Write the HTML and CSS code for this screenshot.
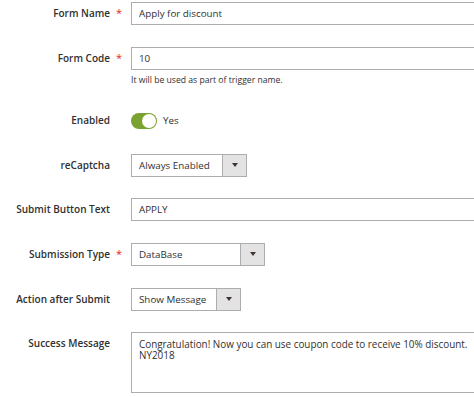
FILE: index.html
```html
<!DOCTYPE html>
<html>
<head>
<meta charset="utf-8">
<link rel="stylesheet" href="styles.css">
</head>
<body>
<form class="form">
  <div class="row">
    <label class="label required">Form Name</label>
    <div class="control"><input class="input" type="text" value="Apply for discount"></div>
  </div>
  <div class="row">
    <label class="label required">Form Code</label>
    <div class="control">
      <input class="input" type="text" value="10">
      <div class="note">It will be used as part of trigger name.</div>
    </div>
  </div>
  <div class="row">
    <label class="label">Enabled</label>
    <div class="control toggle-wrap">
      <span class="toggle"><span class="knob"></span></span>
      <span class="toggle-text">Yes</span>
    </div>
  </div>
  <div class="row">
    <label class="label">reCaptcha</label>
    <div class="control">
      <div class="select sel-recaptcha"><span class="sel-value">Always Enabled</span><span class="sel-btn"><span class="arrow"></span></span></div>
    </div>
  </div>
  <div class="row">
    <label class="label">Submit Button Text</label>
    <div class="control"><input class="input" type="text" value="APPLY"></div>
  </div>
  <div class="row">
    <label class="label required">Submission Type</label>
    <div class="control">
      <div class="select sel-type"><span class="sel-value">DataBase</span><span class="sel-btn"><span class="arrow"></span></span></div>
    </div>
  </div>
  <div class="row">
    <label class="label">Action after Submit</label>
    <div class="control">
      <div class="select sel-action"><span class="sel-value">Show Message</span><span class="sel-btn"><span class="arrow"></span></span></div>
    </div>
  </div>
  <div class="row">
    <label class="label">Success Message</label>
    <div class="control"><div class="textarea">Congratulation! Now you can use coupon code to receive 10% discount.<br>NY2018</div></div>
  </div>
</form>
</body>
</html>
```
FILE: styles.css
```css
html, body {
  margin: 0;
  padding: 0;
  background: #ffffff;
  overflow: hidden;
}
body {
  font-family: "Open Sans", "DejaVu Sans", sans-serif;
  color: #303030;
  width: 474px;
  height: 397px;
}
.form {
  display: flex;
  flex-direction: column;
  gap: 21.6px;
  padding-top: 2px;
}
.row {
  display: flex;
  align-items: flex-start;
}
.label {
  width: 110px;
  flex: none;
  text-align: right;
  font-weight: 600;
  font-size: 10px;
  line-height: 23px;
  height: 23px;
  padding-right: 21px;
  position: relative;
  white-space: nowrap;
  color: #303030;
}
.label.required::after {
  content: "*";
  position: absolute;
  right: 9px;
  top: -1px;
  color: #e22626;
  font-size: 11px;
  font-weight: 400;
}
.control {
  flex: none;
}
.input {
  display: block;
  box-sizing: border-box;
  width: 420px;
  height: 23px;
  border: 1px solid #adadad;
  padding: 0 7px;
  font-family: inherit;
  font-size: 9.8px;
  color: #303030;
  background: #fff;
  margin: 0;
  outline: none;
}
.note {
  font-size: 8.65px;
  line-height: 16px;
  margin-top: 2px;
  color: #303030;
}
.toggle-wrap {
  display: flex;
  align-items: center;
  height: 23px;
  gap: 6px;
}
.toggle {
  display: block;
  width: 26px;
  height: 16px;
  border-radius: 8px;
  background: #79a22e;
  position: relative;
}
.knob {
  position: absolute;
  right: 1px;
  top: 1px;
  width: 14px;
  height: 14px;
  border-radius: 50%;
  background: #fff;
}
.toggle-text {
  font-size: 9.8px;
  color: #303030;
}
.select {
  display: flex;
  box-sizing: border-box;
  height: 23px;
  border: 1px solid #adadad;
  background: #fff;
  font-size: 9.8px;
}
.sel-value {
  flex: 1;
  line-height: 21px;
  padding-left: 7px;
  white-space: nowrap;
}
.sel-btn {
  flex: none;
  width: 23px;
  border-left: 1px solid #adadad;
  background: #e3e3e3;
  display: flex;
  align-items: center;
  justify-content: center;
}
.arrow {
  width: 0;
  height: 0;
  border-left: 3px solid transparent;
  border-right: 3px solid transparent;
  border-top: 4px solid #41362f;
}
.sel-recaptcha { width: 116px; }
.sel-type { width: 134px; }
.sel-action { width: 110px; }
.textarea {
  box-sizing: border-box;
  width: 420px;
  height: 61px;
  border: 1px solid #adadad;
  padding: 6px 7px;
  font-size: 9.9px;
  line-height: 11px;
  white-space: nowrap;
}
```
